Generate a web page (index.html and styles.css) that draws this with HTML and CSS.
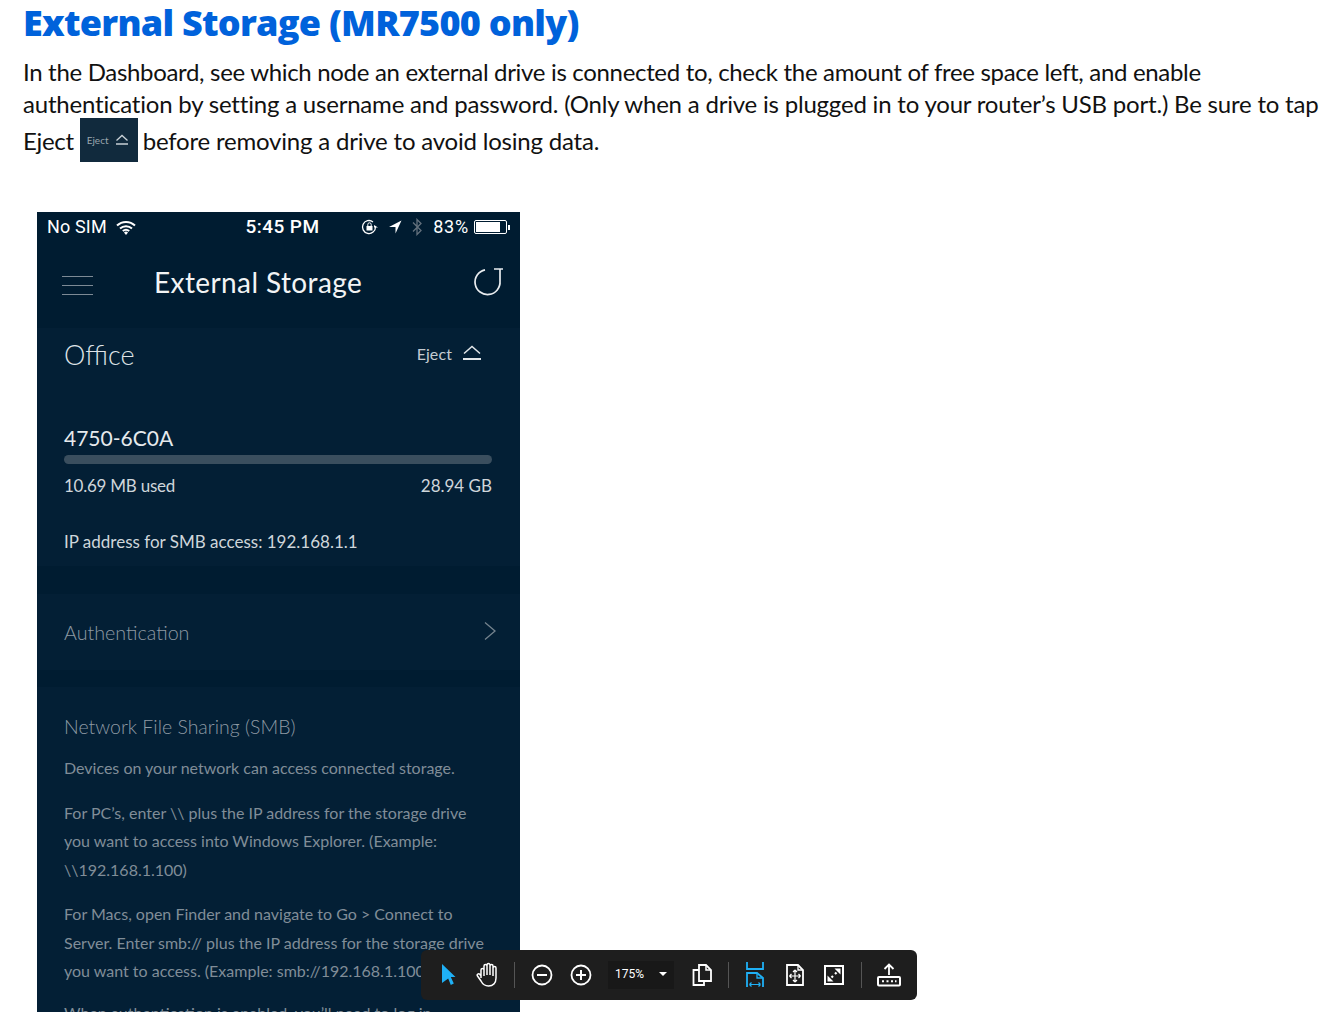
FILE: index.html
```html
<!DOCTYPE html>
<html lang="en">
<head>
<meta charset="utf-8">
<title>External Storage</title>
<link rel="stylesheet" href="styles.css">
</head>
<body>
<main class="doc">
  <h1 class="title">External Storage (MR7500 only)</h1>
  <div class="intro">
    <p class="intro-line">In the Dashboard, see which node an external drive is connected to, check the amount of free space left, and enable</p>
    <p class="intro-line wide">authentication by setting a username and password. (Only when a drive is plugged in to your router’s USB port.) Be sure to tap</p>
    <p class="eject-line"><span>Eject</span><span class="chip"><span class="chip-text">Eject</span><svg class="chip-icon" viewBox="0 0 14 12"><path d="M1.500 6.500 7 1.500l5.500 5" fill="none" stroke="#c9d1d6" stroke-width="1.300"/><path d="M1 10h12" stroke="#c9d1d6" stroke-width="1.500"/></svg></span><span class="wide">before removing a drive to avoid losing data.</span></p>
  </div>
  <section class="phone">
    <div class="status">
      <div class="status-left"><span>No SIM</span>
        <svg class="wifi" viewBox="0 0 20 15"><path d="M1 5.500a13 13 0 0 1 18 0M4 8.500a9 9 0 0 1 12 0M6.800 11a5 5 0 0 1 6.400 0" fill="none" stroke="#fff" stroke-width="2"/><path d="M10 15l-2-2.500a3 3 0 0 1 4 0z" fill="#fff"/></svg>
      </div>
      <div class="status-time">5:45 PM</div>
      <div class="status-right">
        <svg class="lock" viewBox="0 0 18 16"><path d="M14.500 8A6.500 6.500 0 1 1 12 2.900" fill="none" stroke="#fff" stroke-width="1.300"/><path d="M13 6l4 2.500H13z" fill="#fff"/><rect x="5.500" y="7" width="6" height="4.500" fill="#fff"/><path d="M6.800 7V5.500a1.700 1.700 0 0 1 3.400 0V7" fill="none" stroke="#fff"/></svg>
        <svg class="arrow" viewBox="0 0 14 14"><path d="M13.500.5 7.500 13.500V7H1z" fill="#fff"/></svg>
        <svg class="bt" viewBox="0 0 12 18"><path d="M2 4.500l8 8L6 16.500V1.500l4 4-8 8" fill="none" stroke="#63717d" stroke-width="1.300"/></svg>
        <span class="pct">83%</span>
        <span class="battery"><span class="battery-fill"></span></span><span class="battery-cap"></span>
      </div>
    </div>
    <header class="appbar">
      <div class="menu"><span></span><span></span><span></span></div>
      <div class="appbar-title">External Storage</div>
      <svg class="refresh" viewBox="0 0 32 32"><path d="M13 3.800A12.500 12.500 0 1 0 28 15V3M22 3h9" fill="none" stroke="#e8ecef" stroke-width="1.700"/></svg>
    </header>
    <div class="card drive">
      <div class="drive-head">
        <div class="office">Office</div>
        <div class="eject"><span>Eject</span><svg viewBox="0 0 20 16"><path d="M2 8.500 10 1.500l8 7" fill="none" stroke="#e3e7ea" stroke-width="1.500"/><path d="M1 14h18" stroke="#e3e7ea" stroke-width="2"/></svg></div>
      </div>
      <div class="drive-name">4750-6C0A</div>
      <div class="bar"></div>
      <div class="usage"><span class="used">10.69 MB used</span><span>28.94 GB</span></div>
      <div class="smb">IP address for SMB access: 192.168.1.1</div>
    </div>
    <div class="card auth">
      <span>Authentication</span>
      <svg viewBox="0 0 14 20"><path d="M2 1.500 12 10 2 18.500" fill="none" stroke="#75838e" stroke-width="1.300"/></svg>
    </div>
    <div class="card info">
      <h2>Network File Sharing (SMB)</h2>
      <p class="one">Devices on your network can access connected storage.</p>
      <p>For PC’s, enter \\ plus the IP address for the storage drive<br>you want to access into Windows Explorer. (Example:<br>\\192.168.1.100)</p>
      <p>For Macs, open Finder and navigate to Go &gt; Connect to<br>Server. Enter smb:// plus the IP address for the storage drive<br>you want to access. (Example: smb://192.168.1.100)</p>
      <p class="last">When authentication is enabled, you’ll need to log in</p>
    </div>
  </section>
</main>
<nav class="toolbar">
  <svg class="t-cursor" viewBox="0 0 14 22"><path d="M0 0l13.500 13H8.800l3 6.500-3 1.500-2.600-6.500L0 19z" fill="#1fb0f5"/></svg>
  <svg class="t-hand" viewBox="0 0 24 26"><path d="M5 16V8a1.500 1.500 0 0 1 3 0V4a1.500 1.500 0 0 1 3 0V3a1.500 1.500 0 0 1 3 0v1a1.500 1.500 0 0 1 3 0v2a1.500 1.500 0 0 1 3 0v10c0 5-3 8-7.500 8S6.500 22 5 19l-3.500-5c-1-1.500 1-3 2.300-1.700L5 14M8 8v6M11 4v9M14 4v9M17 6v8" fill="none" stroke="#fff" stroke-width="1.500"/></svg>
  <span class="t-sep"></span>
  <svg class="t-zoom" viewBox="0 0 22 22"><circle cx="11" cy="11" r="9.500" fill="none" stroke="#fff" stroke-width="1.800"/><path d="M6 11h10" stroke="#fff" stroke-width="2"/></svg>
  <svg class="t-zoom plus" viewBox="0 0 22 22"><circle cx="11" cy="11" r="9.500" fill="none" stroke="#fff" stroke-width="1.800"/><path d="M6 11h10M11 6v10" stroke="#fff" stroke-width="2"/></svg>
  <div class="t-select"><span>175%</span><i></i></div>
  <svg class="t-pages" viewBox="0 0 20 22"><path d="M7 1h7l5 5v11H7z" fill="none" stroke="#fff" stroke-width="1.800"/><path d="M14 1v5h5" fill="none" stroke="#fff" stroke-width="1.500"/><path d="M7 6H1.500v15H12v-4" fill="none" stroke="#fff" stroke-width="1.800"/></svg>
  <span class="t-sep second"></span>
  <svg class="t-fit" viewBox="0 0 18 26"><path d="M1 0v7h16V0" fill="none" stroke="#1fb0f5" stroke-width="1.800"/><path d="M1 25V11h10l6 5v9" fill="none" stroke="#1fb0f5" stroke-width="1.800"/><path d="M11 11v5h6" fill="none" stroke="#1fb0f5" stroke-width="1.300"/><path d="M3.500 22.500h11M3.500 22.500l2-2M3.500 22.500l2 2M14.500 22.500l-2-2M14.500 22.500l-2 2" fill="none" stroke="#1fb0f5" stroke-width="1.200"/></svg>
  <svg class="t-move" viewBox="0 0 18 22"><path d="M1 1h11l5 5v15H1z" fill="none" stroke="#fff" stroke-width="1.800"/><path d="M12 1v5h5" fill="none" stroke="#fff" stroke-width="1.300"/><path d="M9 6v12M3.500 12h11M9 6l-2 2M9 6l2 2M9 18l-2-2M9 18l2-2M3.500 12l2-2M3.500 12l2 2M14.500 12l-2-2M14.500 12l-2 2" fill="none" stroke="#fff" stroke-width="1.200"/></svg>
  <svg class="t-full" viewBox="0 0 20 20"><rect x="1" y="1" width="18" height="18" fill="none" stroke="#fff" stroke-width="2"/><path d="M10.500 3.500h6v6zM3.500 10.500v6h6z" fill="#fff"/><path d="M12.500 7.500l-1.500 1.500M7.500 12.500 9 11" stroke="#fff" stroke-width="2.200"/></svg>
  <span class="t-sep third"></span>
  <svg class="t-router" viewBox="0 0 24 24"><path d="M12 12V2M7.500 6 12 1.500 16.500 6" fill="none" stroke="#fff" stroke-width="1.800"/><rect x="1" y="14" width="22" height="8.500" rx="1" fill="none" stroke="#fff" stroke-width="2"/><path d="M5 18.300h2M9.500 18.300h2M14 18.300h2M18 18.300h1.500" stroke="#fff" stroke-width="2"/></svg>
</nav>
</body>
</html>
```
FILE: styles.css
```css
* { box-sizing: border-box; }
html, body { margin: 0; height: 1012px; overflow: hidden; background: #fff; }
body { position: relative; font-family: "Lato", "Liberation Sans", sans-serif; }
.doc { padding: 0 0 0 23px; }
.title { margin: 0; font: 800 36px/46px "Open Sans", "Liberation Sans", sans-serif; color: #0062db; letter-spacing: -0.75px; height: 46px; }
.intro { margin: 10px 0 0; height: 106px; font: 400 24px/32px "Lato", sans-serif; letter-spacing: -0.32px; color: #111; white-space: nowrap; }
.intro-line { margin: 0; }
.wide { letter-spacing: -0.2px; }
.eject-line { display: flex; align-items: center; height: 44px; margin: -2px 0 0; }
.eject-line > span:not(.chip) { padding-top: 2px; }
.chip { display: flex; align-items: center; gap: 6px; width: 58px; height: 44px; margin: 0 5px 0 6px; padding-left: 7px; background: #112a3d; letter-spacing: 0; }
.chip-text { font-size: 10px; line-height: 1; color: #9aa6ae; }
.chip-icon { width: 14px; height: 12px; }
.phone { width: 483px; height: 800px; margin: 50px 0 0 14px; background: #001c31; color: #e8ecef; overflow: hidden; }
.status { display: grid; grid-template-columns: 1fr auto 1fr; align-items: center; height: 30px; padding: 0 10px; font: 400 18px/30px "Roboto", sans-serif; letter-spacing: 0.15px; color: #fff; }
.status-left, .status-right { display: flex; align-items: center; }
.status-left { gap: 9px; }
.status-right { justify-content: flex-end; gap: 7px; }
.status-time { padding-left: 8px; font-size: 19px; font-weight: 500; letter-spacing: 0.45px; }
.pct { margin-left: 2px; margin-right: -2px; letter-spacing: 0.8px; }
.wifi { width: 20px; height: 15px; }
.lock { width: 18px; height: 16px; }
.arrow { width: 14px; height: 14px; margin-left: 2px; }
.bt { width: 14px; height: 18px; margin-left: 1px; }
.battery { display: flex; width: 33px; height: 14px; border: 1px solid #fff; padding: 1px; border-radius: 2px; }
.battery-fill { width: 83%; background: #fff; }
.battery-cap { width: 2px; height: 5px; background: #fff; margin-left: -6px; }
.appbar { display: flex; align-items: center; height: 86px; padding: 0 16px 0 25px; }
.menu { display: flex; flex-direction: column; gap: 8px; width: 31px; }
.menu span { height: 1px; background: #7d8a95; }
.appbar-title { margin: 0 0 6px 61px; font: 400 28px/1 "Lato", sans-serif; letter-spacing: 0.4px; color: #f2f4f5; }
.refresh { width: 32px; height: 32px; margin: 0 0 6px auto; }
.card { background: #031f35; padding-left: 27px; padding-right: 28px; }
.drive { height: 238px; }
.drive-head { display: flex; justify-content: space-between; align-items: center; height: 52px; }
.office { font-size: 27px; font-weight: 300; color: #dfe4e8; }
.eject { display: flex; align-items: center; gap: 10px; padding: 0 10px 2px 0; font-size: 16px; letter-spacing: 0.1px; color: #c3cbd1; }
.eject svg { width: 20px; height: 16px; }
.drive-name { margin-top: 44px; font: 400 21px/28px "Lato", sans-serif; color: #e6eaed; }
.bar { height: 9px; margin-top: 3px; background: #3a4e5e; border-radius: 4.500px; }
.usage { display: flex; justify-content: space-between; margin-top: 10px; font-size: 17px; line-height: 24px; color: #cfd6db; }
.used { letter-spacing: -0.25px; }
.smb { margin-top: 32px; font-size: 17px; line-height: 24px; color: #cfd6db; }
.auth { display: flex; align-items: center; justify-content: space-between; height: 76px; margin-top: 28px; padding-right: 23px; font-size: 19.700px; font-weight: 300; color: #8e9aa4; }
.auth svg { width: 14px; height: 20px; margin-bottom: 2px; }
.info { margin-top: 17px; padding-top: 26px; height: 400px; color: #808d98; font-size: 16px; line-height: 28.500px; white-space: nowrap; }
.info h2 { margin: 0; font-size: 19.500px; font-weight: 300; line-height: 28px; color: #8e9aa4; }
.info p { margin: 16px 0 0; }
.info .one { margin-top: 13px; }
.info .last { margin-top: 13px; }
.toolbar { position: absolute; left: 421px; top: 950px; width: 496px; height: 50px; display: flex; align-items: center; background: #1e1e1e; border-radius: 6px; color: #fff; }
.t-cursor { width: 14px; height: 22px; margin-left: 21px; }
.t-hand { width: 24px; height: 26px; margin-left: 20px; }
.t-sep { width: 1px; height: 26px; margin-left: 14px; background: #555; }
.t-sep.second { margin-left: 16px; }
.t-sep.third { margin-left: 17px; }
.t-zoom { width: 22px; height: 22px; margin-left: 16px; }
.t-zoom.plus { margin-left: 17px; }
.t-select { display: flex; align-items: center; width: 66px; height: 28px; margin-left: 16px; padding-left: 7px; padding-bottom: 2px; background: #181818; font: 400 12px/1 "Roboto", sans-serif; }
.t-select i { width: 0; height: 0; margin-left: 15px; border: 4px solid transparent; border-top: 4px solid #fff; border-bottom: 0; }
.t-pages { width: 20px; height: 22px; margin-left: 18px; }
.t-fit { width: 18px; height: 26px; margin-left: 17px; }
.t-move { width: 18px; height: 22px; margin-left: 22px; }
.t-full { width: 20px; height: 20px; margin-left: 20px; }
.t-router { width: 24px; height: 24px; margin-left: 15px; }
```
